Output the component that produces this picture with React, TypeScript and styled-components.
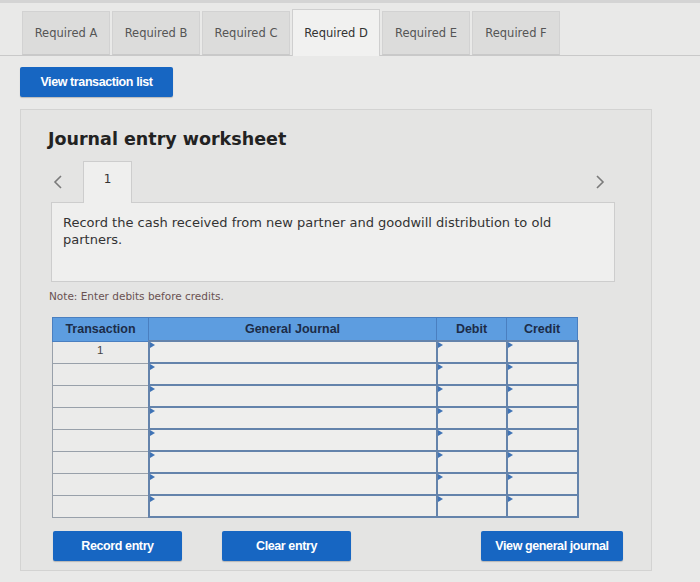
import styled, { createGlobalStyle } from "styled-components";

const GlobalStyle = createGlobalStyle`
  html, body {
    margin: 0;
    padding: 0;
    background: #e9e9e8;
  }
  body {
    font-family: "DejaVu Sans", Verdana, sans-serif;
    width: 700px;
    height: 582px;
    overflow: hidden;
  }
`;

const tabs = ["Required A", "Required B", "Required C", "Required D", "Required E", "Required F"];
const rows = ["1", "", "", "", "", "", "", ""];

const Page = styled.div`
  border-top: 3px solid #d4d4d4;
  padding-top: 7px;
`;

const TabBar = styled.div`
  display: flex;
  align-items: flex-end;
  gap: 2px;
  padding-left: 22px;
  height: 45px;
  border-bottom: 1px solid #c9c9c9;
`;

const Tab = styled.div<{ $active?: boolean }>`
  width: 88px;
  height: ${(p) => (p.$active ? "47px" : "44px")};
  margin-bottom: ${(p) => (p.$active ? "-1px" : "0")};
  box-sizing: border-box;
  display: flex;
  align-items: center;
  justify-content: center;
  font-size: 11.5px;
  color: ${(p) => (p.$active ? "#333" : "#555")};
  background: ${(p) => (p.$active ? "#f1f1f0" : "#dcdcdb")};
  border: 1px solid ${(p) => (p.$active ? "#cfcfcf" : "#d2d2d2")};
  border-bottom: ${(p) => (p.$active ? "none" : "1px solid #c9c9c9")};
`;

const BlueButton = styled.button<{ $w: number }>`
  width: ${(p) => p.$w}px;
  height: 30px;
  border: none;
  border-radius: 2px;
  background: #1766c2;
  color: #fff;
  font-family: "Liberation Sans", Arial, sans-serif;
  font-weight: bold;
  font-size: 12.5px;
  letter-spacing: -0.4px;
  box-shadow: 0 1px 1px rgba(0, 0, 0, 0.2);
  cursor: pointer;
`;

const TopAction = styled.div`
  padding: 11px 0 0 20px;
`;

const Panel = styled.div`
  margin: 12px 48px 0 20px;
  height: 462px;
  box-sizing: border-box;
  background: #e4e4e3;
  border: 1px solid #d3d3d2;
  padding: 19px 0 0 30px;
`;

const Title = styled.h2`
  margin: 0 0 0 -3px;
  font-size: 17.5px;
  font-weight: bold;
  color: #222;
  font-family: "DejaVu Sans", Verdana, sans-serif;
`;

const StepRow = styled.div`
  display: flex;
  align-items: flex-end;
  margin-top: 11px;
  width: 574px;
  height: 42px;
`;

const ArrowBox = styled.span`
  width: 31px;
  display: flex;
  align-self: center;
  padding-left: 1px;
  margin-top: 2px;
`;

const Chevron = ({ dir }: { dir: "left" | "right" }) => (
  <svg width="12" height="16" viewBox="0 0 12 16">
    <polyline
      points={dir === "left" ? "9,2 3,8 9,14" : "3,2 9,8 3,14"}
      fill="none"
      stroke="#7a7a7a"
      strokeWidth="1.6"
    />
  </svg>
);

const StepTab = styled.div`
  width: 49px;
  height: 42px;
  box-sizing: border-box;
  background: #efefee;
  border: 1px solid #cdcdcd;
  border-bottom: none;
  display: flex;
  justify-content: center;
  padding-top: 10px;
  font-size: 12px;
  color: #333;
  margin-bottom: -1px;
  position: relative;
  z-index: 1;
`;

const Spacer = styled.div`
  flex: 1;
`;

const Description = styled.div`
  width: 564px;
  height: 80px;
  box-sizing: border-box;
  background: #efefee;
  border: 1px solid #cdcdcd;
  padding: 11px 60px 0 11px;
  font-size: 13px;
  line-height: 17px;
  color: #333;
`;

const Note = styled.div`
  margin: 8px 0 0 -2px;
  font-size: 10.5px;
  color: #6a5252;
`;

const Table = styled.table`
  margin: 15px 0 0 1px;
  border-collapse: collapse;
  font-family: "Liberation Sans", Arial, sans-serif;
`;

const Th = styled.th<{ $w: number }>`
  width: ${(p) => p.$w}px;
  height: 22px;
  padding: 0;
  background: #5d9de0;
  border: 1px solid #4a7fc0;
  font-size: 12.5px;
  font-weight: bold;
  color: #1c2c48;
`;

const TxCell = styled.td`
  height: 19px;
  padding: 0;
  border: 1px solid #98a0aa;
  background: #ebebea;
  text-align: center;
  font-size: 11.5px;
  color: #444;
  vertical-align: top;
  padding-top: 2px;
`;

const InputCell = styled.td`
  height: 19px;
  padding: 0;
  border: 2px solid #6483ab;
  background: #eeeeed;
  position: relative;
  &::before {
    content: "";
    position: absolute;
    left: 0;
    top: 0;
    border-top: 3px solid transparent;
    border-bottom: 3px solid transparent;
    border-left: 5px solid #3f73b5;
  }
`;

const Footer = styled.div`
  display: flex;
  gap: 40px;
  margin: 13px 0 0 2px;
  width: 570px;
`;

const App = () => {
  return (
    <Page>
      <GlobalStyle />
      <TabBar>
        {tabs.map((t) => (
          <Tab key={t} $active={t === "Required D"}>
            {t}
          </Tab>
        ))}
      </TabBar>
      <TopAction>
        <BlueButton $w={153}>View transaction list</BlueButton>
      </TopAction>
      <Panel>
        <Title>Journal entry worksheet</Title>
        <StepRow>
          <ArrowBox>
            <Chevron dir="left" />
          </ArrowBox>
          <StepTab>1</StepTab>
          <Spacer />
          <ArrowBox>
            <Chevron dir="right" />
          </ArrowBox>
        </StepRow>
        <Description>
          Record the cash received from new partner and goodwill distribution to old partners.
        </Description>
        <Note>Note: Enter debits before credits.</Note>
        <Table>
          <thead>
            <tr>
              <Th $w={95}>Transaction</Th>
              <Th $w={287}>General Journal</Th>
              <Th $w={69}>Debit</Th>
              <Th $w={70}>Credit</Th>
            </tr>
          </thead>
          <tbody>
            {rows.map((r, i) => (
              <tr key={i}>
                <TxCell>{r}</TxCell>
                <InputCell />
                <InputCell />
                <InputCell />
              </tr>
            ))}
          </tbody>
        </Table>
        <Footer>
          <BlueButton $w={129}>Record entry</BlueButton>
          <BlueButton $w={129}>Clear entry</BlueButton>
          <Spacer />
          <BlueButton $w={142}>View general journal</BlueButton>
        </Footer>
      </Panel>
    </Page>
  );
};

export default App;
